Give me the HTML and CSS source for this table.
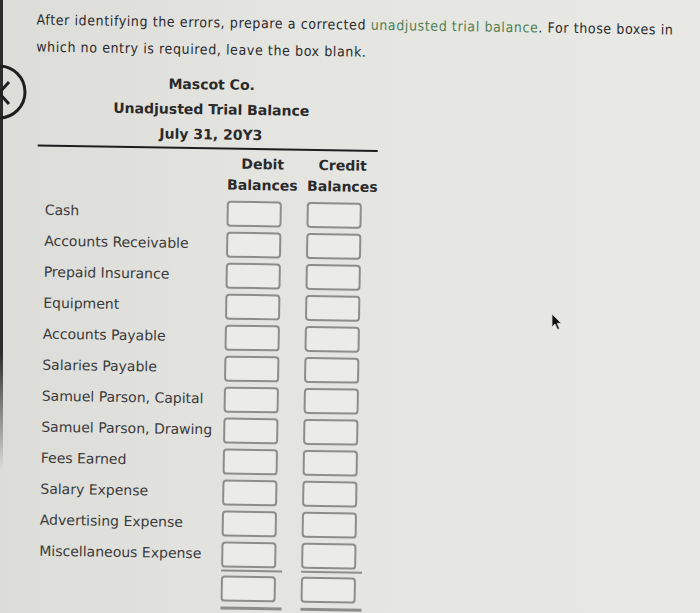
FILE: index.html
```html
<!DOCTYPE html>
<html lang="en">
<head>
<meta charset="utf-8">
<title>Unadjusted Trial Balance</title>
<link rel="stylesheet" href="styles.css">
</head>
<body>
<div class="screen">
  <div class="edge"></div>
  <div class="back-btn" aria-label="Back">
    <svg width="40" height="64" viewBox="0 0 40 64">
      <circle cx="-1" cy="30" r="26" fill="none" stroke="#1f1f1f" stroke-width="3"/>
      <polyline points="9,20 -1,31 9,42" fill="none" stroke="#1f1f1f" stroke-width="3" stroke-linejoin="round"/>
    </svg>
  </div>

  <div class="sheet">
    <p class="prompt">After identifying the errors, prepare a corrected <span class="term">unadjusted trial balance</span>. For those boxes in which no entry is required, leave the box blank.</p>

    <div class="tb">
      <div class="tb-head">
        <div>Mascot Co.</div>
        <div>Unadjusted Trial Balance</div>
        <div>July 31, 20Y3</div>
      </div>

      <div class="tb-grid">
        <div class="corner"></div>
        <div class="col-head">Debit<br>Balances</div>
        <div class="col-head">Credit<br>Balances</div>

        <div class="label">Cash</div><div class="cell"><span class="box"></span></div><div class="cell"><span class="box"></span></div>
        <div class="label">Accounts Receivable</div><div class="cell"><span class="box"></span></div><div class="cell"><span class="box"></span></div>
        <div class="label">Prepaid Insurance</div><div class="cell"><span class="box"></span></div><div class="cell"><span class="box"></span></div>
        <div class="label">Equipment</div><div class="cell"><span class="box"></span></div><div class="cell"><span class="box"></span></div>
        <div class="label">Accounts Payable</div><div class="cell"><span class="box"></span></div><div class="cell"><span class="box"></span></div>
        <div class="label">Salaries Payable</div><div class="cell"><span class="box"></span></div><div class="cell"><span class="box"></span></div>
        <div class="label">Samuel Parson, Capital</div><div class="cell"><span class="box"></span></div><div class="cell"><span class="box"></span></div>
        <div class="label">Samuel Parson, Drawing</div><div class="cell"><span class="box"></span></div><div class="cell"><span class="box"></span></div>
        <div class="label">Fees Earned</div><div class="cell"><span class="box"></span></div><div class="cell"><span class="box"></span></div>
        <div class="label">Salary Expense</div><div class="cell"><span class="box"></span></div><div class="cell"><span class="box"></span></div>
        <div class="label">Advertising Expense</div><div class="cell"><span class="box"></span></div><div class="cell"><span class="box"></span></div>
        <div class="label">Miscellaneous Expense</div><div class="cell"><span class="box"></span></div><div class="cell"><span class="box"></span></div>

        <div class="corner"></div>
        <div class="total"><span class="box"></span></div>
        <div class="total"><span class="box"></span></div>
      </div>
    </div>
  </div>

  <svg class="cursor" width="12" height="18" viewBox="0 0 12 18">
    <path d="M1 1 L1 14 L4 11 L6.5 16.5 L8.5 15.6 L6.1 10.3 L10.2 10.3 Z" fill="#111" stroke="#d8d8d8" stroke-width="0.8"/>
  </svg>
</div>
</body>
</html>
```

FILE: styles.css
```css
html, body {
  margin: 0;
  padding: 0;
}

body {
  width: 700px;
  height: 613px;
  overflow: hidden;
  background: linear-gradient(to right, #dcdcd9 0%, #e4e4e1 40%, #e8e8e5 100%);
  font-family: "DejaVu Sans", Verdana, sans-serif;
  color: #333;
}

.screen {
  position: relative;
  width: 700px;
  height: 613px;
  overflow: hidden;
}

.edge {
  position: absolute;
  left: 0;
  top: 0;
  width: 3px;
  height: 470px;
  background: linear-gradient(to bottom, #2c2c2c 0%, #2c2c2c 75%, rgba(60, 60, 60, 0) 100%);
}

.back-btn {
  position: absolute;
  left: 0;
  top: 62px;
  width: 40px;
  height: 64px;
}

.back-btn svg {
  display: block;
}

.sheet {
  transform: rotate(0.9deg);
  transform-origin: 0 0;
}

.prompt {
  margin: 0;
  padding: 6px 0 0 37px;
  width: 650px;
  font-family: "DejaVu Sans Condensed", "DejaVu Sans", sans-serif;
  font-size: 14px;
  letter-spacing: 0.62px;
  line-height: 27px;
  color: #2a2a2a;
}

.term {
  color: #4f7f52;
}

.tb {
  margin: 9px 0 0 40px;
  width: 340px;
}

.tb-head {
  font-weight: bold;
  font-size: 14px;
  line-height: 25px;
  color: #2a2a2a;
  text-align: center;
  padding-left: 6px;
  border-bottom: 2px solid #1e1e1e;
}

.tb-grid {
  display: grid;
  grid-template-columns: 190px 80px 70px;
  grid-template-rows: 42px repeat(12, 26px) auto;
  row-gap: 5px;
  margin-top: 4px;
}

.col-head {
  justify-self: start;
  text-align: center;
  font-weight: bold;
  font-size: 14px;
  line-height: 21px;
  color: #2a2a2a;
}

.label {
  display: flex;
  align-items: center;
  padding-left: 8px;
  font-size: 14px;
  color: #3a3a3a;
  white-space: nowrap;
  margin-top: -3px;
}

.cell {
  display: flex;
  align-items: flex-start;
}

.box {
  display: block;
  box-sizing: border-box;
  width: 55px;
  height: 26px;
  border: 2px solid #8d8d8b;
  border-radius: 4px;
  background: #ebebe9;
}

.total {
  box-sizing: border-box;
  width: 61px;
  margin-top: -3px;
  padding: 4px 0 5px;
  border-top: 2px solid #8d8d8b;
  border-bottom: 3px solid #8d8d8b;
}

.cursor {
  position: absolute;
  left: 551px;
  top: 313px;
}
```
